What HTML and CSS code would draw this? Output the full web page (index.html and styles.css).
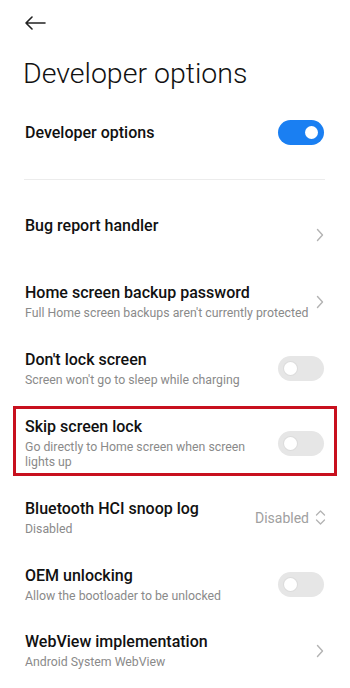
FILE: index.html
```html
<!DOCTYPE html>
<html lang="en">
<head>
<meta charset="utf-8">
<title>Developer options</title>
<link rel="stylesheet" href="styles.css">
</head>
<body>
<div class="screen">
  <header class="topbar">
    <svg class="back" width="22" height="14" viewBox="0 0 22 14" aria-hidden="true">
      <path d="M21 7H2M8 1L2 7l6 6" fill="none" stroke="#222" stroke-width="1.6" stroke-linecap="round" stroke-linejoin="round"/>
    </svg>
  </header>
  <h1 class="page-title">Developer options</h1>

  <div class="master">
    <span class="master-label">Developer options</span>
    <span class="toggle on"><span class="knob"></span></span>
  </div>
  <div class="divider"></div>

  <div class="list">
    <div class="row">
      <div class="text">
        <div class="title">Bug report handler</div>
        <div class="sub">&nbsp;</div>
      </div>
      <svg class="chev" width="8" height="14" viewBox="0 0 8 14"><path d="M1.5 1.5L6.5 7l-5 5.5" fill="none" stroke="#b3b3b3" stroke-width="1.4" stroke-linecap="round" stroke-linejoin="round"/></svg>
    </div>

    <div class="row">
      <div class="text">
        <div class="title">Home screen backup password</div>
        <div class="sub">Full Home screen backups aren't currently protected</div>
      </div>
      <svg class="chev" width="8" height="14" viewBox="0 0 8 14"><path d="M1.5 1.5L6.5 7l-5 5.5" fill="none" stroke="#b3b3b3" stroke-width="1.4" stroke-linecap="round" stroke-linejoin="round"/></svg>
    </div>

    <div class="row">
      <div class="text narrow">
        <div class="title">Don't lock screen</div>
        <div class="sub">Screen won't go to sleep while charging</div>
      </div>
      <span class="toggle"><span class="knob"></span></span>
    </div>

    <div class="row highlighted">
      <div class="text narrow">
        <div class="title">Skip screen lock</div>
        <div class="sub">Go directly to Home screen when screen lights up</div>
      </div>
      <span class="toggle"><span class="knob"></span></span>
      <span class="mark"></span>
    </div>

    <div class="row">
      <div class="text">
        <div class="title">Bluetooth HCI snoop log</div>
        <div class="sub">Disabled</div>
      </div>
      <div class="value">
        <span>Disabled</span>
        <svg width="11" height="17" viewBox="0 0 11 17"><path d="M1.5 6L5.5 2l4 4M1.5 11l4 4 4-4" fill="none" stroke="#b3b3b3" stroke-width="1.3" stroke-linecap="round" stroke-linejoin="round"/></svg>
      </div>
    </div>

    <div class="row">
      <div class="text narrow">
        <div class="title">OEM unlocking</div>
        <div class="sub">Allow the bootloader to be unlocked</div>
      </div>
      <span class="toggle"><span class="knob"></span></span>
    </div>

    <div class="row last">
      <div class="text">
        <div class="title">WebView implementation</div>
        <div class="sub">Android System WebView</div>
      </div>
      <svg class="chev" width="8" height="14" viewBox="0 0 8 14"><path d="M1.5 1.5L6.5 7l-5 5.5" fill="none" stroke="#b3b3b3" stroke-width="1.4" stroke-linecap="round" stroke-linejoin="round"/></svg>
    </div>
  </div>
</div>
</body>
</html>
```
FILE: styles.css
```css
* { box-sizing: border-box; }
html, body {
  margin: 0;
  padding: 0;
  background: #fff;
}
body {
  font-family: Roboto, "Noto Sans", "Liberation Sans", sans-serif;
  color: #111;
  width: 350px;
  height: 688px;
  overflow: hidden;
}
.screen {
  display: flex;
  flex-direction: column;
}
.topbar {
  height: 52px;
  padding: 16px 0 0 24px;
}
.back { display: block; }
.page-title {
  margin: 0;
  padding: 0 0 0 23px;
  font-weight: 300;
  font-size: 28.5px;
  line-height: 44px;
  color: #111;
}
.master {
  display: flex;
  align-items: center;
  justify-content: space-between;
  padding: 0 26px 0 25px;
  height: 66px;
  margin-top: 3px;
}
.master-label {
  font-size: 16px;
  font-weight: 500;
  color: #111;
}
.divider {
  height: 1px;
  background: #ececec;
  margin: 14px 25px 21px 24px;
}
.toggle {
  position: relative;
  flex: none;
  width: 46px;
  height: 25px;
  border-radius: 13px;
  background: #e6e6e6;
  display: flex;
  align-items: center;
  padding: 0 6px;
}
.toggle .knob {
  width: 13px;
  height: 13px;
  border-radius: 50%;
  background: #fff;
  box-shadow: 0 0 0 1px #dcdcdc;
}
.toggle.on {
  background: #1a7ff2;
  justify-content: flex-end;
}
.toggle.on .knob {
  box-shadow: none;
}
.list {
  display: flex;
  flex-direction: column;
}
.row {
  position: relative;
  display: flex;
  align-items: center;
  justify-content: space-between;
  padding: 14px 26px 14px 25px;
}
.row.last { margin-top: -1px; }
.text { min-width: 0; }
.text.narrow { max-width: 235px; }
.title {
  font-size: 16px;
  font-weight: 500;
  line-height: 21px;
  color: #111;
}
.sub {
  font-size: 12.3px;
  line-height: 15px;
  padding-top: 3px;
  color: #8a8a8a;
}
.chev { flex: none; }
.value {
  display: flex;
  align-items: center;
  gap: 6px;
  font-size: 14px;
  color: #a0a0a0;
  margin-right: -2px;
}
.value svg { display: block; }
.mark {
  position: absolute;
  left: 13px;
  right: 13px;
  top: 4px;
  bottom: 8px;
  border: 3px solid #c8101e;
  pointer-events: none;
}
```
